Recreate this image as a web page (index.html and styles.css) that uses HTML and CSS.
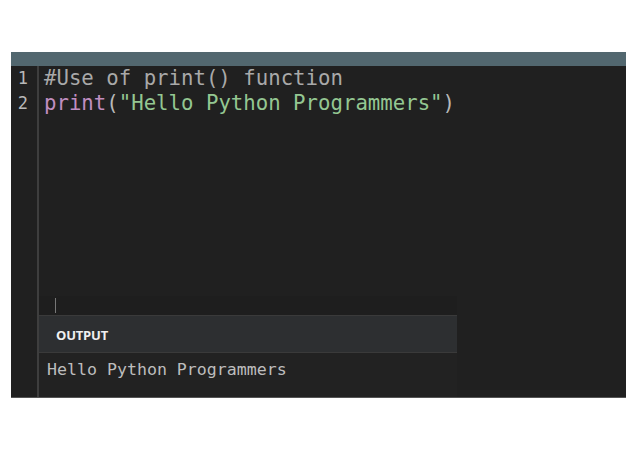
FILE: index.html
```html
<!DOCTYPE html>
<html>
<head>
<meta charset="utf-8">
<link rel="stylesheet" href="styles.css">
</head>
<body>
<div class="window">
  <div class="titlebar"></div>
  <div class="editor">
    <div class="gutter">
      <div class="ln">1</div>
      <div class="ln">2</div>
    </div>
    <div class="main">
      <div class="code">
        <div class="line"><span class="c">#Use of print() function</span></div>
        <div class="line"><span class="k">print</span><span class="p">(</span><span class="s">"Hello Python Programmers"</span><span class="p">)</span></div>
      </div>
      <div class="panel">
        <div class="caret-row"><span class="caret"></span></div>
        <div class="panel-head">OUTPUT</div>
        <div class="panel-body">Hello Python Programmers</div>
      </div>
    </div>
  </div>
</div>
</body>
</html>
```
FILE: styles.css
```css
html, body { margin: 0; padding: 0; background: #ffffff; }
body { width: 638px; height: 451px; overflow: hidden; }
.window {
  margin: 52px 0 0 11px;
  width: 615px;
  height: 346px;
  background: #202020;
  display: flex;
  flex-direction: column;
  border-bottom: 1px solid #555;
  box-sizing: border-box;
}
.titlebar { height: 14px; background: #52676f; flex: none; }
.editor { flex: 1; display: flex; min-height: 0; }
.gutter {
  width: 28px;
  border-right: 2px solid #3e3e3e;
  font-family: "DejaVu Sans Mono", monospace;
  font-size: 17px;
  color: #b8b8b8;
  text-align: right;
  padding-right: 9px;
  box-sizing: border-box;
  flex: none;
}
.ln { height: 25px; line-height: 25px; }
.main { flex: 1; display: flex; flex-direction: column; }
.code {
  flex: 1;
  padding-left: 5px;
  font-family: "DejaVu Sans Mono", monospace;
  font-size: 20.7px;
}
.line { height: 25px; line-height: 25px; white-space: pre; }
.c { color: #a9a9a9; }
.k { color: #c08ec0; }
.p { color: #b8b8b8; }
.s { color: #94c792; }
.panel { width: 418px; flex: none; background: #222222; }
.caret-row { height: 19px; padding-left: 16px; background: #1e1e1e; }
.caret { display: inline-block; width: 1px; height: 15px; margin-top: 2px; background: #777; }
.panel-head {
  height: 38px;
  line-height: 38px;
  background: #2d2f31;
  border-top: 1px solid #3a3a3a;
  border-bottom: 1px solid #3a3a3a;
  box-sizing: border-box;
  padding-left: 17px;
  font-family: "Open Sans", "DejaVu Sans", sans-serif;
  font-weight: 700;
  font-size: 13px;
  color: #f0f0f0;
  letter-spacing: -0.2px;
}
.panel-body {
  height: 44px;
  padding: 6px 0 0 8px;
  box-sizing: border-box;
  font-family: "DejaVu Sans Mono", monospace;
  font-size: 16.6px;
  line-height: 22px;
  color: #bdbdbd;
}
```
